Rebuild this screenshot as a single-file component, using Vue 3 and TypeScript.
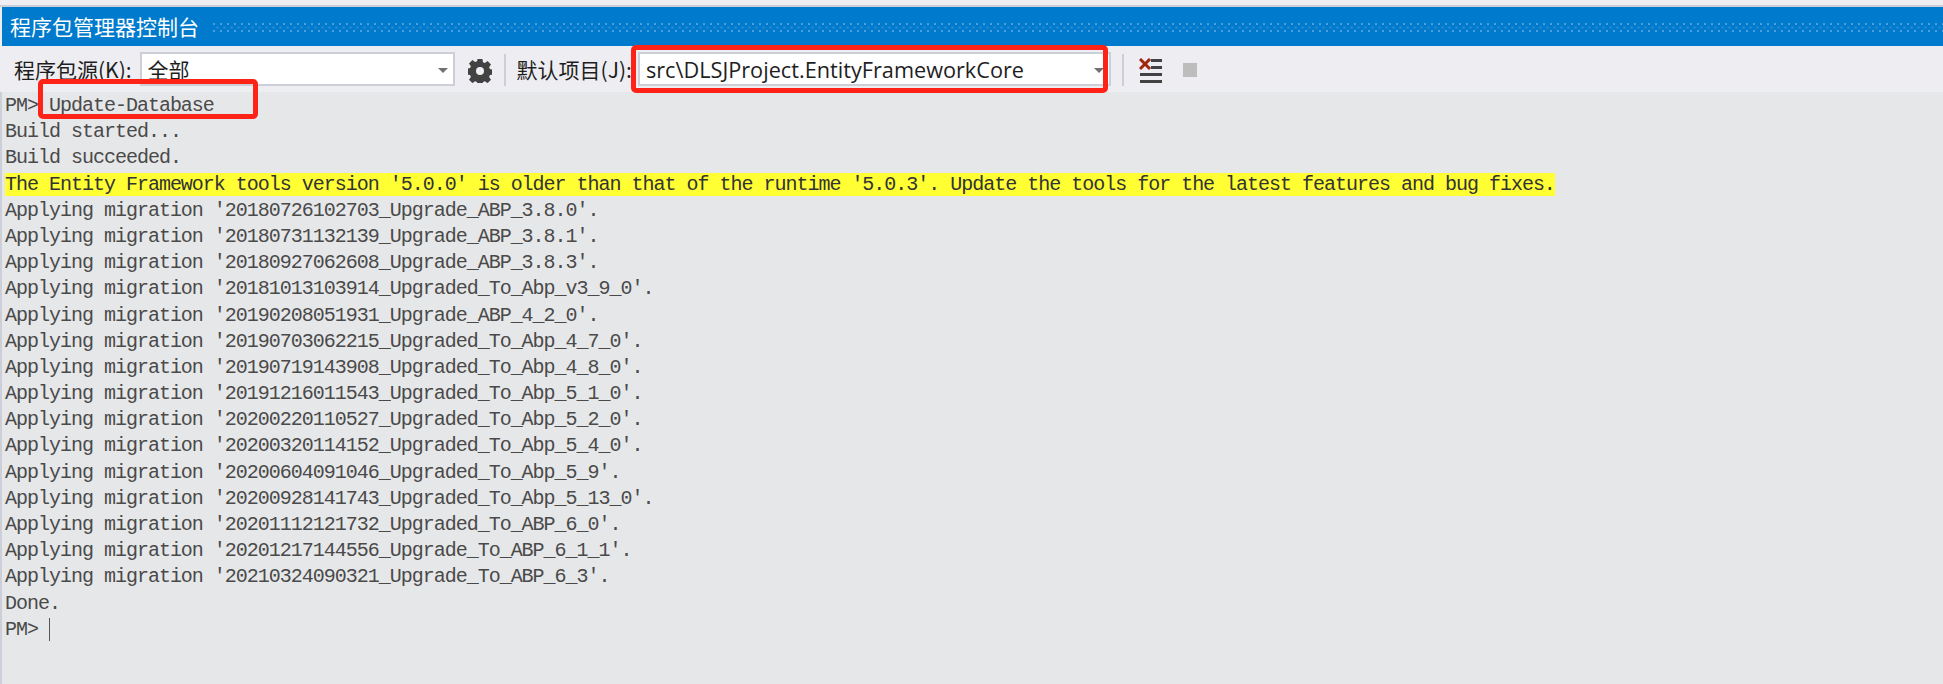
<script setup lang="ts">
const lines: { text: string; warn?: boolean }[] = [
  { text: "Build started..." },
  { text: "Build succeeded." },
  { text: "The Entity Framework tools version '5.0.0' is older than that of the runtime '5.0.3'. Update the tools for the latest features and bug fixes.", warn: true },
  { text: "Applying migration '20180726102703_Upgrade_ABP_3.8.0'." },
  { text: "Applying migration '20180731132139_Upgrade_ABP_3.8.1'." },
  { text: "Applying migration '20180927062608_Upgrade_ABP_3.8.3'." },
  { text: "Applying migration '20181013103914_Upgraded_To_Abp_v3_9_0'." },
  { text: "Applying migration '20190208051931_Upgrade_ABP_4_2_0'." },
  { text: "Applying migration '20190703062215_Upgraded_To_Abp_4_7_0'." },
  { text: "Applying migration '20190719143908_Upgraded_To_Abp_4_8_0'." },
  { text: "Applying migration '20191216011543_Upgraded_To_Abp_5_1_0'." },
  { text: "Applying migration '20200220110527_Upgraded_To_Abp_5_2_0'." },
  { text: "Applying migration '20200320114152_Upgraded_To_Abp_5_4_0'." },
  { text: "Applying migration '20200604091046_Upgraded_To_Abp_5_9'." },
  { text: "Applying migration '20200928141743_Upgraded_To_Abp_5_13_0'." },
  { text: "Applying migration '20201112121732_Upgraded_To_ABP_6_0'." },
  { text: "Applying migration '20201217144556_Upgrade_To_ABP_6_1_1'." },
  { text: "Applying migration '20210324090321_Upgrade_To_ABP_6_3'." },
  { text: "Done." },
];
</script>

<template>
  <div class="page">
    <div class="top-strip"></div>
    <div class="title-bar">
      <span class="title">程序包管理器控制台</span>
      <svg class="grip" height="9" aria-hidden="true">
        <defs>
          <pattern id="grip-dots" width="7" height="9" patternUnits="userSpaceOnUse">
            <rect x="0" y="0" width="2" height="2" fill="#4a9fdc" />
            <rect x="0" y="7" width="2" height="2" fill="#4a9fdc" />
            <rect x="3.5" y="3.5" width="2" height="2" fill="#2f8fd4" />
          </pattern>
        </defs>
        <rect width="100%" height="9" fill="url(#grip-dots)" />
      </svg>
    </div>
    <div class="toolbar">
      <span class="label first">程序包源(K):</span>
      <div class="combo source">
        <span class="combo-text cjk">全部</span>
        <span class="arrow"></span>
      </div>
      <svg class="gear" viewBox="0 0 24 24" width="24" height="24" aria-hidden="true">
        <path fill="#424242" fill-rule="evenodd" d="M9.6 0h4.8l.6 3.2 1.9.8 2.7-1.9 3.4 3.4-1.9 2.7.8 1.9 3.1.6v4.8l-3.1.6-.8 1.9 1.9 2.7-3.4 3.4-2.7-1.9-1.9.8-.6 3h-4.8l-.6-3-1.9-.8-2.7 1.9-3.4-3.4 1.9-2.7-.8-1.9-3-.6V9.7l3-.6.8-1.9-1.9-2.7 3.4-3.4 2.7 1.9 1.9-.8zM12 8a4 4 0 1 0 0 8 4 4 0 0 0 0-8z" />
      </svg>
      <span class="sep"></span>
      <span class="label second">默认项目(J):</span>
      <div class="combo project">
        <span class="combo-text">src\DLSJProject.EntityFrameworkCore</span>
        <span class="arrow"></span>
      </div>
      <span class="sep after"></span>
      <svg class="clear" viewBox="0 0 24 25" width="24" height="25" aria-hidden="true">
        <path stroke="#a1260d" stroke-width="3" d="M1 1l10 10M11 1L1 11" />
        <path fill="#424242" d="M12 1h11v3H12zM12 8h11v3H12zM1 15h22v3H1zM1 22h22v3H1z" />
      </svg>
      <span class="stop"></span>
    </div>
    <div class="console">
      <div class="line">PM&gt; Update-Database</div>
      <div v-for="l in lines" :key="l.text" class="line">
        <span :class="{ warn: l.warn }">{{ l.text }}</span>
      </div>
      <div class="line">PM&gt; <span class="caret"></span></div>
      <div class="mark mark-cmd"></div>
      <div class="mark mark-project"></div>
    </div>
  </div>
</template>

<style>
html, body { margin: 0; padding: 0; background: #eeeef2; }
</style>

<style scoped>
.page {
  width: 1943px;
  height: 684px;
  overflow: hidden;
  display: flex;
  flex-direction: column;
  background: #eeeef2;
  font-family: "Noto Sans CJK SC", "Liberation Sans", sans-serif;
}
.top-strip {
  height: 5px;
  flex: none;
  border-bottom: 2px solid #ccced8;
}
.title-bar {
  height: 39px;
  flex: none;
  margin-left: 2px;
  display: flex;
  align-items: center;
  gap: 14px;
  padding-left: 8px;
  background: #007acc;
}
.title {
  color: #fff;
  font-size: 21px;
  line-height: 39px;
  white-space: nowrap;
}
.grip {
  flex: 1;
  min-width: 0;
  margin-top: 2px;
}
.toolbar {
  height: 46px;
  flex: none;
  margin-left: 2px;
  display: flex;
  align-items: center;
  padding-left: 12px;
  color: #1e1e1e;
  font-size: 21px;
}
.label {
  white-space: nowrap;
  font-family: "Noto Sans CJK SC", sans-serif;
}
.combo {
  height: 34px;
  box-sizing: border-box;
  display: flex;
  align-items: center;
  justify-content: space-between;
  background: #fff;
  border: 2px solid #ccced8;
}
.source { width: 315px; margin-left: 8px; }
.project { width: 473px; margin-left: 6px; }
.combo-text {
  padding-left: 6px;
  color: #1e1e1e;
  font-family: "Open Sans", "Noto Sans", "Noto Sans CJK SC", sans-serif;
  font-size: 21.7px;
  white-space: nowrap;
}
.combo-text.cjk { font-family: "Noto Sans CJK SC", sans-serif; font-size: 21px; }
.arrow {
  width: 0;
  height: 0;
  margin-right: 5px;
  margin-top: 2px;
  border-left: 5px solid transparent;
  border-right: 5px solid transparent;
  border-top: 5px solid #717171;
}
.gear { margin-left: 13px; margin-top: 3px; }
.sep {
  width: 2px;
  height: 32px;
  margin-left: 12px;
  margin-top: 2px;
  background: #ccced8;
}
.second { margin-left: 11px; }
.sep.after { margin-left: 11px; }
.clear { margin-left: 15px; margin-top: 2px; }
.stop {
  width: 14px;
  height: 14px;
  margin-left: 20px;
  margin-top: 2px;
  background: #bdbdbd;
}
.console {
  position: relative;
  flex: 1;
  min-height: 0;
  border-left: 2px solid #ccced8;
  padding: 1px 0 0 3px;
  background: #e6e7e9;
  color: #4a4a4a;
  font-family: "Liberation Mono", monospace;
  font-size: 20px;
  letter-spacing: -1.01px;
  line-height: 26.2px;
  white-space: pre;
}
.line { height: 26.2px; }
.warn { background: #ffff33; color: #333; }
.caret {
  display: inline-block;
  width: 1px;
  height: 23px;
  background: #555;
  vertical-align: middle;
}
.mark {
  position: absolute;
  box-sizing: border-box;
  border: 5px solid #ff2317;
  border-radius: 5px;
}
.mark-cmd { left: 36px; top: -13px; width: 220px; height: 40px; }
.mark-project { left: 629px; top: -47px; width: 477px; height: 48px; }
</style>
